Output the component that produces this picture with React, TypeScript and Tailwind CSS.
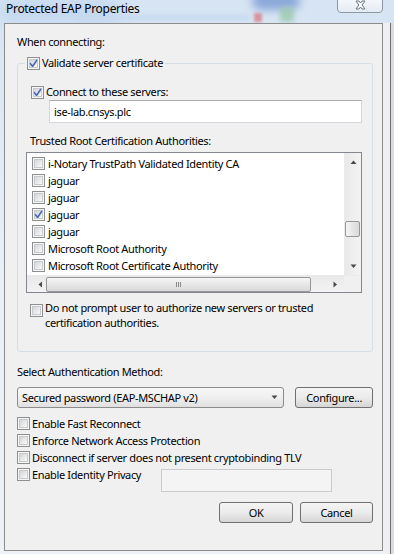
import React from "react";

function CheckBox({ checked = false }: { checked?: boolean }) {
  return (
    <span className="relative inline-block w-[13px] h-[13px] shrink-0 border border-[#8e8f8f] bg-[#f6f6f6]">
      <span className="absolute left-[1px] top-[1px] w-[9px] h-[9px] border border-[#c6c9cd] bg-gradient-to-br from-[#d3d5d8] to-[#fafafa]" />
      {checked && (
        <svg className="absolute left-0 top-0" width="11" height="11" viewBox="0 0 11 11">
          <path d="M2.3 5.6 L4.6 8.3 L8.8 2.2" fill="none" stroke="#c9d3e8" strokeWidth="2.6" strokeLinecap="round" strokeLinejoin="round" />
          <path d="M2.3 5.6 L4.6 8.3 L8.8 2.2" fill="none" stroke="#4162a8" strokeWidth="1.4" strokeLinecap="round" strokeLinejoin="round" />
        </svg>
      )}
    </span>
  );
}

function Tri({ dir }: { dir: "up" | "down" | "left" | "right" }) {
  const d =
    dir === "up"
      ? "M0.5 4 L3.5 0.5 L6.5 4 Z"
      : dir === "down"
      ? "M0.5 0.5 L3.5 4 L6.5 0.5 Z"
      : dir === "left"
      ? "M4 0.5 L0.5 3.5 L4 6.5 Z"
      : "M0.5 0.5 L4 3.5 L0.5 6.5 Z";
  const horiz = dir === "up" || dir === "down";
  return (
    <svg width={horiz ? 7 : 5} height={horiz ? 5 : 7} viewBox={horiz ? "0 0 7 5" : "0 0 5 7"}>
      <path d={d} fill="#4a4a4a" />
    </svg>
  );
}

const items: { label: string; checked?: boolean }[] = [
  { label: "i-Notary TrustPath Validated Identity CA" },
  { label: "jaguar" },
  { label: "jaguar" },
  { label: "jaguar", checked: true },
  { label: "jaguar" },
  { label: "Microsoft Root Authority" },
  { label: "Microsoft Root Certificate Authority" },
];

export default function App() {
  return (
    <div className="relative w-[394px] h-[554px] overflow-hidden font-['Noto_Sans',sans-serif] text-[11px] tracking-[-0.35px] text-black bg-gradient-to-b from-[#d6e4f3] via-[#e9f0f8] to-[#eef2f6]">
      {/* glass background decoration */}
      <div className="absolute left-0 top-0 w-[120px] h-[24px] bg-[#bcd3ee] blur-[8px] opacity-70" />
      <div className="absolute left-[252px] top-[-8px] w-[48px] h-[18px] rounded-full bg-[#6a8fcf] blur-[4px] opacity-70" />
      <div className="absolute left-[254px] top-[13px] w-[8px] h-[9px] bg-[#d98c96] blur-[1.5px] opacity-90" />
      <div className="absolute left-[280px] top-[7px] w-[14px] h-[15px] bg-[#9ccaae] blur-[2.5px] opacity-80" />
      <div className="absolute left-[80px] top-[15px] w-[170px] h-[5px] bg-[#c7d9ef] blur-[2px]" />

      <div className="relative flex flex-col h-full">
        {/* title bar */}
        <div className="h-[23px] shrink-0 flex items-start justify-between pr-[11px]">
          <span className="ml-[6px] mt-[1px] text-[12px] leading-[16px] tracking-[-0.3px] text-black">
            Protected EAP Properties
          </span>
          <div className="w-[46px] h-[14px] -mt-[1px] rounded-b-[4px] border border-[#8d97a5] bg-gradient-to-b from-[#f4f7fb] to-[#e4ebf3] flex items-center justify-center">
            <svg width="11" height="10" viewBox="0 0 11 10" className="-mt-[2px]">
              <path
                d="M1 1 L4 1 L5.5 3 L7 1 L10 1 L7.2 5 L10 9 L7 9 L5.5 7 L4 9 L1 9 L3.8 5 Z"
                fill="#fbfbfb"
                stroke="#6f7681"
                strokeWidth="1"
                strokeLinejoin="round"
              />
            </svg>
          </div>
        </div>

        <div className="flex flex-1 min-h-0">
          <div className="w-[4px] shrink-0" />
          {/* client panel */}
          <div className="w-[379px] h-[528px] shrink-0 border border-[#8b8b8b] bg-[#f0f0f0] pl-[12px] pr-[9px] pt-[10px] flex flex-col">
            <div className="leading-[16px]">When connecting:</div>

            <fieldset className="mt-[5px] w-[356px] border border-[#d5dfe5] rounded-[3px] pb-[21px]">
              <legend className="ml-[7px] px-[2px] flex items-center gap-[2px] leading-[16px]">
                <CheckBox checked />
                <span>Validate server certificate</span>
              </legend>

              <div className="ml-[13px] mt-[13px] flex items-center gap-[2px] leading-[16px]">
                <CheckBox checked />
                <span>Connect to these servers:</span>
              </div>

              <div className="ml-[31px] w-[313px] h-[23px] border border-[#d3d7dd] border-t-[#abadb3] bg-white flex items-center pl-[4px] leading-[16px]">
                ise-lab.cnsys.plc
              </div>

              <div className="ml-[12px] mt-[10px] leading-[16px]">Trusted Root Certification Authorities:</div>

              {/* list box */}
              <div className="ml-[8px] mt-[3px] w-[336px] h-[141px] border border-[#828790] bg-white flex flex-col">
                <div className="flex h-[122px]">
                  <div className="flex-1 pt-[2px] pl-[5px] overflow-hidden">
                    {items.map((it, i) => (
                      <div key={i} className="h-[17px] flex items-center gap-[3px] leading-[17px] whitespace-nowrap">
                        <CheckBox checked={it.checked} />
                        <span>{it.label}</span>
                      </div>
                    ))}
                  </div>
                  {/* vertical scrollbar */}
                  <div className="w-[17px] shrink-0 flex flex-col bg-gradient-to-r from-[#e9e9e9] to-[#f3f3f3] border-l border-[#ebebeb]">
                    <div className="h-[17px] flex items-center justify-center pt-[2px]">
                      <Tri dir="up" />
                    </div>
                    <div className="h-[51px]" />
                    <div className="h-[16px] w-[15px] rounded-[2px] border border-[#979797] bg-gradient-to-r from-[#f5f5f5] to-[#d9d9d9]" />
                    <div className="flex-1" />
                    <div className="h-[17px] flex items-center justify-center">
                      <Tri dir="down" />
                    </div>
                  </div>
                </div>
                {/* horizontal scrollbar */}
                <div className="h-[17px] flex bg-gradient-to-b from-[#e9e9e9] to-[#f3f3f3] border-t border-[#ebebeb]">
                  <div className="w-[17px] flex items-center justify-end pr-[1px]">
                    <Tri dir="left" />
                  </div>
                  <div className="flex-1 flex items-center pl-[2px]">
                    <div className="w-[265px] h-[15px] rounded-[2px] border border-[#979797] bg-gradient-to-b from-[#f5f5f5] to-[#d9d9d9] flex items-center justify-center gap-[1px]">
                      <span className="w-[1px] h-[5px] bg-[#8a8a8a]" />
                      <span className="w-[1px] h-[5px] bg-[#8a8a8a]" />
                      <span className="w-[1px] h-[5px] bg-[#8a8a8a]" />
                    </div>
                  </div>
                  <div className="w-[17px] flex items-center justify-center">
                    <Tri dir="right" />
                  </div>
                  <div className="w-[17px] bg-[#f0f0f0]" />
                </div>
              </div>

              <div className="ml-[12px] mt-[7px] flex items-start gap-[2px]">
                <span className="mt-[4px]">
                  <CheckBox />
                </span>
                <span className="leading-[15px]">
                  Do not prompt user to authorize new servers or trusted
                  <br />
                  certification authorities.
                </span>
              </div>
            </fieldset>

            <div className="mt-[12px] leading-[16px]">Select Authentication Method:</div>

            <div className="mt-[7px] flex items-center gap-[11px]">
              <div className="w-[268px] h-[21px] rounded-[3px] border border-[#8c8c8c] bg-gradient-to-b from-[#f7f7f7] via-[#efefef] to-[#e0e0e0] flex items-center justify-between pl-[4px] pr-[5px]">
                <span className="leading-[14px]">Secured password (EAP-MSCHAP v2)</span>
                <Tri dir="down" />
              </div>
              <div className="w-[78px] h-[21px] rounded-[3px] border border-[#707070] bg-gradient-to-b from-[#f4f4f4] via-[#ebebeb] to-[#d6d6d6] flex items-center justify-center leading-[14px]">
                Configure...
              </div>
            </div>

            <div className="mt-[7px] flex flex-col">
              {["Enable Fast Reconnect", "Enforce Network Access Protection", "Disconnect if server does not present cryptobinding TLV"].map(
                (t) => (
                  <div key={t} className="h-[17px] flex items-center gap-[2px] leading-[17px]">
                    <CheckBox />
                    <span>{t}</span>
                  </div>
                )
              )}
              <div className="flex items-start">
                <div className="h-[17px] flex items-center gap-[2px] leading-[17px] w-[144px]">
                  <CheckBox />
                  <span>Enable Identity Privacy</span>
                </div>
                <div className="mt-[3px] w-[171px] h-[23px] border border-[#c9cbcf] bg-[#f4f4f4]" />
              </div>
            </div>

            <div className="mt-[10px] flex justify-end gap-[7px]">
              <div className="w-[74px] h-[21px] rounded-[3px] border border-[#707070] bg-gradient-to-b from-[#f4f4f4] via-[#ebebeb] to-[#d6d6d6] flex items-center justify-center leading-[14px]">
                OK
              </div>
              <div className="w-[73px] h-[21px] rounded-[3px] border border-[#707070] bg-gradient-to-b from-[#f4f4f4] via-[#ebebeb] to-[#d6d6d6] flex items-center justify-center leading-[14px]">
                Cancel
              </div>
            </div>
          </div>
          {/* right frame */}
          <div className="flex-1 flex">
            <div className="w-[7px] bg-[#eef0f3]" />
            <div className="w-[1px] bg-[#6e6e6e]" />
            <div className="flex-1 bg-[#dcdcdc]" />
          </div>
        </div>
      </div>
    </div>
  );
}
